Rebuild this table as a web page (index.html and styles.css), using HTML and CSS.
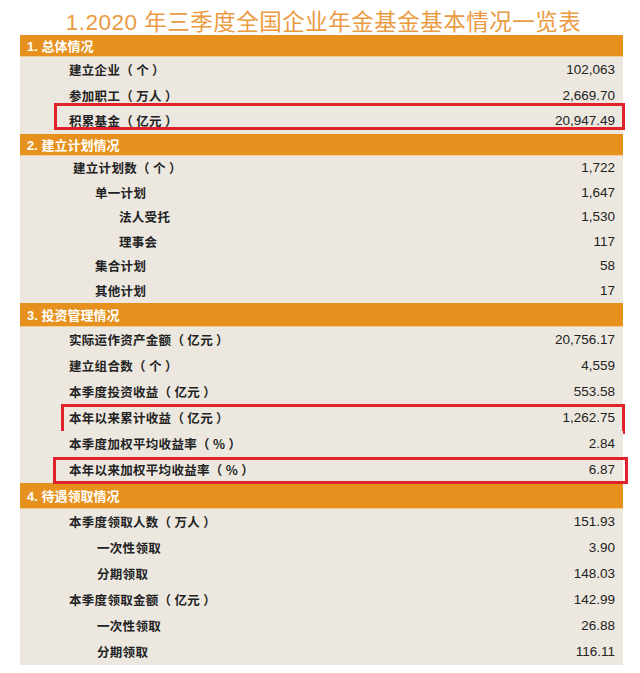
FILE: index.html
```html
<!DOCTYPE html>
<html lang="zh-CN">
<head>
<meta charset="utf-8">
<title>2020年三季度全国企业年金基金基本情况一览表</title>
<link rel="stylesheet" href="styles.css">
</head>
<body>
<div class="sheet">
  <h1 class="title">1.2020 年三季度全国企业年金基金基本情况一览表</h1>

  <section class="sec sec1">
    <div class="head">1. 总体情况</div>
    <div class="row"><span class="label l1">建立企业（ 个 ）</span><span class="num">102,063</span></div>
    <div class="row"><span class="label l1">参加职工（ 万人 ）</span><span class="num">2,669.70</span></div>
    <div class="row"><span class="label l1">积累基金（ 亿元 ）</span><span class="num">20,947.49</span><span class="mark mark1"></span></div>
  </section>

  <section class="sec sec2">
    <div class="head">2. 建立计划情况</div>
    <div class="row"><span class="label l1b">建立计划数（ 个 ）</span><span class="num">1,722</span></div>
    <div class="row"><span class="label l2">单一计划</span><span class="num">1,647</span></div>
    <div class="row"><span class="label l3">法人受托</span><span class="num">1,530</span></div>
    <div class="row"><span class="label l3">理事会</span><span class="num">117</span></div>
    <div class="row"><span class="label l2">集合计划</span><span class="num">58</span></div>
    <div class="row"><span class="label l2">其他计划</span><span class="num">17</span></div>
  </section>

  <section class="sec sec3">
    <div class="head">3. 投资管理情况</div>
    <div class="row"><span class="label l1">实际运作资产金额（ 亿元 ）</span><span class="num">20,756.17</span></div>
    <div class="row"><span class="label l1">建立组合数（ 个 ）</span><span class="num">4,559</span></div>
    <div class="row"><span class="label l1">本季度投资收益（ 亿元 ）</span><span class="num">553.58</span></div>
    <div class="row"><span class="label l1">本年以来累计收益（ 亿元 ）</span><span class="num">1,262.75</span><span class="mark mark2"></span></div>
    <div class="row"><span class="label l1">本季度加权平均收益率（ % ）</span><span class="num">2.84</span></div>
    <div class="row"><span class="label l1">本年以来加权平均收益率（ % ）</span><span class="num">6.87</span><span class="mark mark3"></span></div>
  </section>

  <section class="sec sec4">
    <div class="head">4. 待遇领取情况</div>
    <div class="row"><span class="label l1">本季度领取人数（ 万人 ）</span><span class="num">151.93</span></div>
    <div class="row"><span class="label l2b">一次性领取</span><span class="num">3.90</span></div>
    <div class="row"><span class="label l2b">分期领取</span><span class="num">148.03</span></div>
    <div class="row"><span class="label l1">本季度领取金额（ 亿元 ）</span><span class="num">142.99</span></div>
    <div class="row"><span class="label l2b">一次性领取</span><span class="num">26.88</span></div>
    <div class="row"><span class="label l2b">分期领取</span><span class="num">116.11</span></div>
  </section>
</div>
</body>
</html>
```

FILE: styles.css
```css
html, body {
  margin: 0;
  padding: 0;
  background: #ffffff;
}

body {
  font-family: "Liberation Sans", "Noto Sans CJK SC", sans-serif;
  color: #1e1e1e;
}

.sheet {
  width: 603px;
  margin: 0 0 0 20px;
}

.title {
  height: 35px;
  margin: 0;
  display: flex;
  align-items: center;
  justify-content: center;
  padding-top: 5px;
  padding-left: 4px;
  box-sizing: border-box;
  font-size: 22.5px;
  font-weight: 400;
  color: #ea9a40;
  white-space: nowrap;
  letter-spacing: 0.5px;
}

.sec {
  display: flex;
  flex-direction: column;
}

.head {
  height: 22px;
  display: flex;
  align-items: center;
  padding-left: 7px;
  background: #e6911d;
  color: #ffffff;
  font-family: "Liberation Sans", "Noto Sans CJK SC", sans-serif;
  font-size: 13px;
  font-weight: 700;
  border-bottom: 1px solid #f2cc97;
  box-sizing: border-box;
}

.row {
  position: relative;
  display: flex;
  align-items: center;
  justify-content: space-between;
  padding-right: 8px;
  background: #ece8e0;
  box-sizing: border-box;
}

.sec1 .row { height: 25.5px; }
.sec2 .row { height: 24.5px; }
.sec3 .row { height: 26px; }
.sec4 .row { height: 26px; }

.sec3 .head { height: 24px; }
.sec4 .head { height: 26px; }

.label {
  font-family: "Noto Sans CJK SC", sans-serif;
  font-size: 12.5px;
  font-weight: 600;
  letter-spacing: 0.3px;
  color: #222222;
  white-space: pre;
}

.l1 { padding-left: 49px; }
.l1b { padding-left: 53px; }
.l2 { padding-left: 75px; }
.l2b { padding-left: 77px; }
.l3 { padding-left: 99px; }

.num {
  font-family: "Liberation Sans", Arial, sans-serif;
  font-size: 13.5px;
  color: #222222;
}

/* red annotation boxes drawn over the rows */
.mark {
  position: absolute;
  border: 3px solid #e0222b;
  box-sizing: border-box;
  pointer-events: none;
}

.mark1 { left: 34px; right: -2px; top: -5px; height: 27px; }
.mark2 { left: 41px; right: -2px; top: -1px; height: 30px; }
.mark3 { left: 33px; right: -5px; top: 0; height: 27px; }
```
